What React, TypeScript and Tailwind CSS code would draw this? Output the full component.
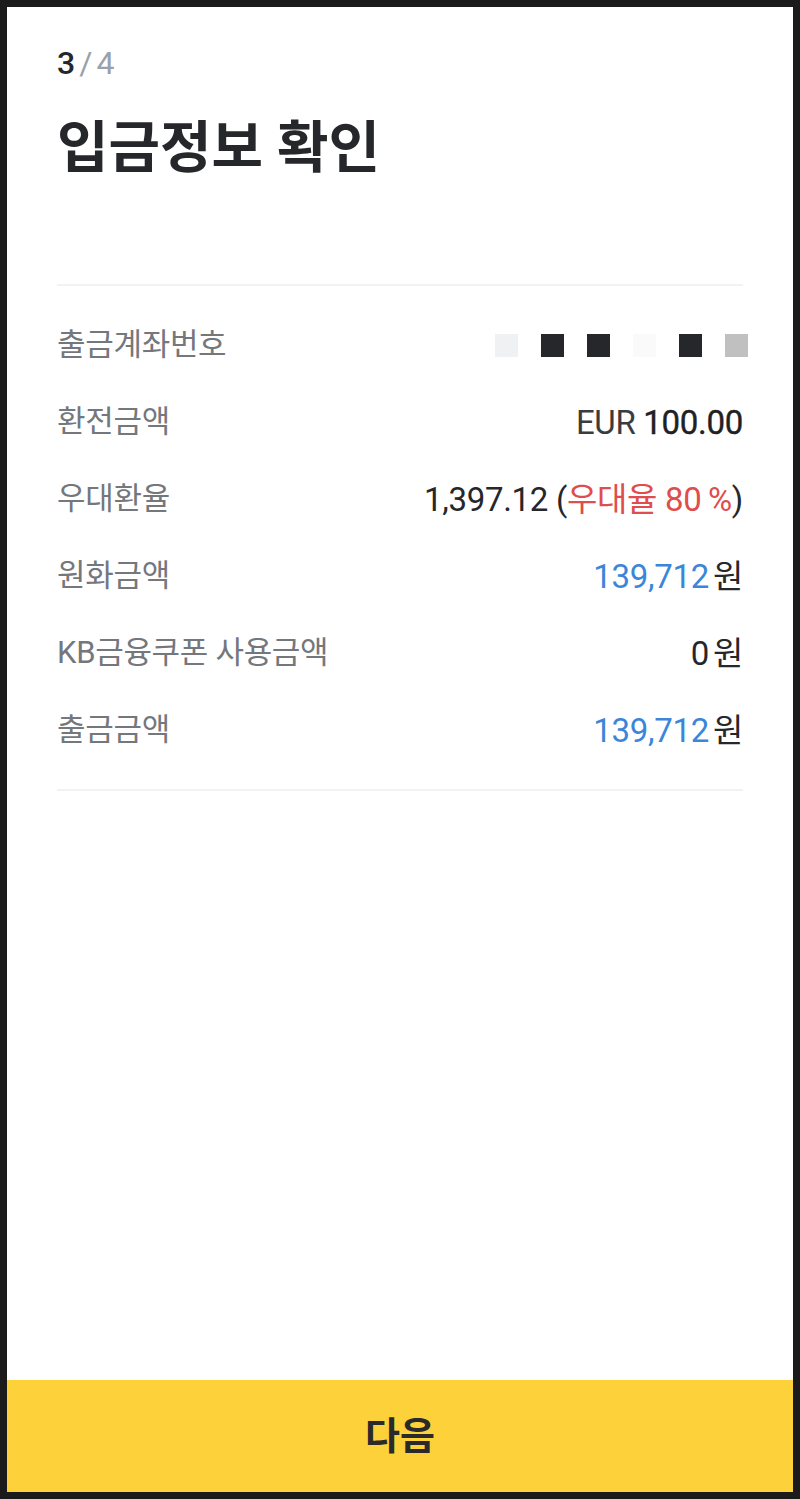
import React from 'react';

const font = { fontFamily: 'Roboto, "Noto Sans CJK KR", sans-serif' };

const Row: React.FC<{ label: string; children: React.ReactNode }> = ({ label, children }) => (
  <div className="flex h-[77px] items-center justify-between">
    <span className="text-[31px] text-[#74777c] tracking-[-0.3px]">{label}</span>
    <div className="text-[33px] text-[#25272b] tracking-[-0.3px]">{children}</div>
  </div>
);

const Won: React.FC<{ value: string; blue?: boolean }> = ({ value, blue }) => (
  <span>
    <span className={blue ? 'text-[#3c86d9]' : 'text-[#25272b]'}>{value}</span>
    <span className="ml-1 text-[#25272b]">원</span>
  </span>
);

const App: React.FC = () => {
  const masked = ['bg-[#f0f1f3]', 'bg-[#25272b]', 'bg-[#25272b]', 'bg-[#fafafa]', 'bg-[#25272b]', 'bg-[#c0c0c0]'];

  return (
    <div className="h-[1499px] bg-[#1b1b1b] p-[7px]" style={font}>
      <div className="flex h-full flex-col bg-white">
        <div className="flex-1 px-[50px]">
          <div className="pt-[32px] text-[32px] leading-[48px]">
            <span className="font-medium text-[#25272b]">3</span>
            <span className="mx-[4px] text-[#9aa1aa]">/</span>
            <span className="text-[#9aa1aa]">4</span>
          </div>
          <h1 className="mt-[27px] text-[56px] leading-[68px] font-bold text-[#25272b]">입금정보 확인</h1>

          <div className="mt-[102px] border-t-2 border-[#f1f2f4] pt-[21px] pb-[20px]">
            <Row label="출금계좌번호">
              <div className="flex gap-[23px] -mr-[5px]">
                {masked.map((c, i) => (
                  <div key={i} className={`h-[23px] w-[23px] ${c}`} />
                ))}
              </div>
            </Row>
            <Row label="환전금액">
              <span className="text-[#3a3c40]">EUR</span>{' '}
              <span className="text-[#1f2125] [-webkit-text-stroke:0.4px_#1f2125]">100.00</span>
            </Row>
            <Row label="우대환율">
              <span>1,397.12 (</span>
              <span className="text-[#e04d4d]">우대율 80{'\u2009'}%</span>
              <span>)</span>
            </Row>
            <Row label="원화금액">
              <Won value="139,712" blue />
            </Row>
            <Row label="KB금융쿠폰 사용금액">
              <Won value="0" />
            </Row>
            <Row label="출금금액">
              <Won value="139,712" blue />
            </Row>
          </div>
          <div className="border-t-2 border-[#f1f2f4]" />
        </div>

        <button className="h-[112px] w-full bg-[#fdd13a] text-[38px] font-bold text-[#2a2a2a]">다음</button>
      </div>
    </div>
  );
};

export default App;
